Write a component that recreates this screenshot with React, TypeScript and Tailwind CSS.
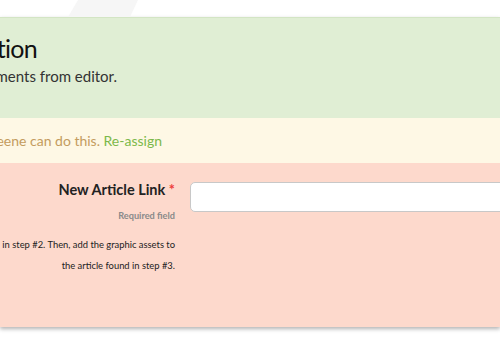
import type { ReactNode } from 'react';

// Pins the end of a line at a fixed x; the start runs off the left edge of the page.
function EndAt({ width, children, className = '' }: { width: string; children: ReactNode; className?: string }) {
  return (
    <div className={`flex justify-end ${width}`}>
      <div className={`whitespace-nowrap ${className}`}>{children}</div>
    </div>
  );
}

export default function App() {
  return (
    <div className="h-[340px] w-[500px] overflow-hidden bg-white font-['Lato','Noto_Sans',sans-serif]">
      <div className="relative h-[17px]">
        <svg className="absolute left-0 top-0" width="500" height="17" viewBox="0 0 500 17">
          <polygon points="68,17 78,0 138,0 130,17" fill="#f6f6f6" />
        </svg>
      </div>

      <div className="shadow-[0_2px_4px_rgba(0,0,0,0.3)]">
        <section className="h-[101px] border-t border-[#d3e5c4] bg-[#e0eed4] pt-[15px]">
          <EndAt width="w-[37px]" className="text-[25px] leading-[30px] tracking-[-0.7px] text-[#111]">
            Publication
          </EndAt>
          <EndAt width="w-[117px]" className="mt-[4px] text-[15px] leading-[18px] text-[#333]">
            Review the comments from editor.
          </EndAt>
        </section>

        <section className="h-[45px] bg-[#fef8e5] pt-[14px]">
          <EndAt width="w-[162px]" className="text-[14px] leading-[18px] text-[#c49c5e]">
            Only Jane Greene can do this. <span className="text-[#7cb84a]">Re-assign</span>
          </EndAt>
        </section>

        <section className="flex h-[164px] items-start bg-[#fdd9cc] pt-[18px]">
          <div className="flex w-[175px] shrink-0 flex-col items-end">
            <EndAt width="w-[175px]" className="text-[14.5px] font-bold leading-[18px] text-[#222]">
              New Article Link <span className="text-[#ee3b3b]">*</span>
            </EndAt>
            <div className="mt-[11px] whitespace-nowrap text-[9.2px] font-bold leading-[11px] text-[#8a8a8a]">
              Required field
            </div>
            <div className="mt-[13px] text-[9.4px] leading-[21px] text-[#222]">
              <EndAt width="w-[175px]">Upload the article found in step #2. Then, add the graphic assets to</EndAt>
              <EndAt width="w-[175px]">the article found in step #3.</EndAt>
            </div>
          </div>
          <input
            type="text"
            aria-label="New Article Link"
            className="ml-[15px] mt-[1px] h-[30px] w-[400px] shrink-0 rounded-[5px] border border-[#c8c8c8] bg-white px-2 outline-none"
          />
        </section>
      </div>
    </div>
  );
}
